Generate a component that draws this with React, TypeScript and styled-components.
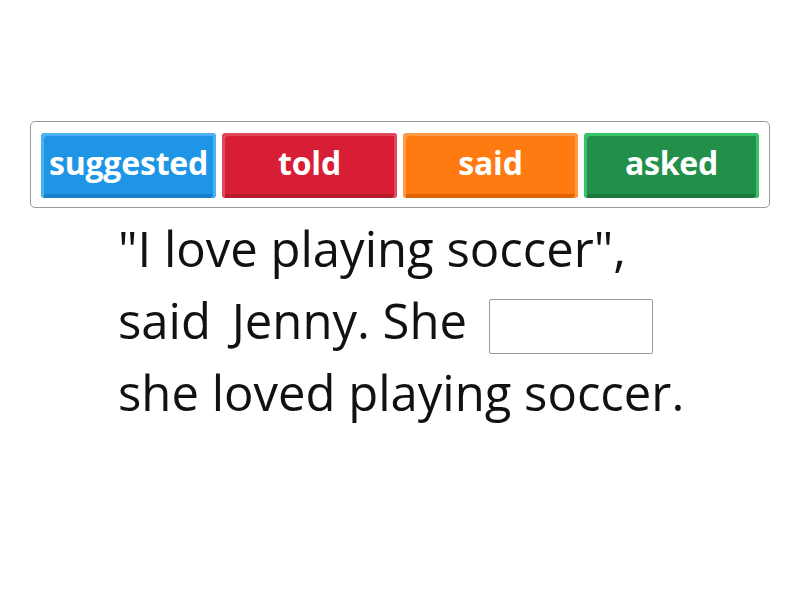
import React from "react";
import styled, { createGlobalStyle } from "styled-components";

const Global = createGlobalStyle`
  html, body { margin: 0; padding: 0; background: #ffffff; }
  body { width: 800px; height: 600px; overflow: hidden; font-family: "Open Sans", "Liberation Sans", sans-serif; }
`;

const Page = styled.div`
  width: 800px;
  height: 600px;
  display: flex;
  flex-direction: column;
  align-items: center;
  padding-top: 121px;
  box-sizing: border-box;
`;

const Tray = styled.div`
  width: 740px;
  box-sizing: border-box;
  border: 1px solid #9a9a9a;
  border-radius: 5px;
  padding: 11px 10px 9px 10px;
  display: flex;
  gap: 6px;
`;

type Tone = { base: string; rim: string; dark: string };

const tones: Record<string, Tone> = {
  blue: { base: "#1e95e5", rim: "#4cb0f1", dark: "#1780c9" },
  red: { base: "#d81e35", rim: "#e3495c", dark: "#b8192c" },
  orange: { base: "#ff7a10", rim: "#ff9a46", dark: "#e06502" },
  green: { base: "#22904a", rim: "#35c468", dark: "#1b763c" },
};

const Word = styled.div<{ $tone: Tone }>`
  flex: 0 0 175px;
  height: 65px;
  box-sizing: border-box;
  border-radius: 4px;
  background: ${(p) => p.$tone.base};
  box-shadow: inset 3px 3px 0 ${(p) => p.$tone.rim}, inset -3px 0 0 ${(p) => p.$tone.rim},
    inset 0 -4px 0 ${(p) => p.$tone.dark};
  display: flex;
  align-items: center;
  justify-content: center;
  padding-bottom: 6px;
  color: #ffffff;
  font-family: "Open Sans", "Liberation Sans", sans-serif;
  font-weight: 700;
  font-size: 32px;
  letter-spacing: -0.2px;
`;

const Sentence = styled.div`
  width: 600px;
  margin-left: 118px;
  align-self: flex-start;
  margin-top: 4px;
  font-family: "Open Sans", "Liberation Sans", sans-serif;
  font-size: 49px;
  line-height: 72px;
  color: #111111;
`;

const Spacer = styled.span`
  display: inline-block;
  width: 8px;
`;

const Blank = styled.span`
  display: inline-block;
  width: 164px;
  height: 55px;
  box-sizing: border-box;
  border: 1px solid #9a9a9a;
  border-radius: 2px;
  vertical-align: middle;
  margin-left: 22px;
  margin-top: 2px;
`;

export default function App() {
  const words: [string, Tone][] = [
    ["suggested", tones.blue],
    ["told", tones.red],
    ["said", tones.orange],
    ["asked", tones.green],
  ];
  return (
    <>
      <Global />
      <Page>
        <Tray>
          {words.map(([w, t]) => (
            <Word key={w} $tone={t}>
              {w}
            </Word>
          ))}
        </Tray>
        <Sentence>
          {'"I love playing soccer", said'}
          <Spacer /> {"Jenny. She"}
          <Blank /> {"she loved playing soccer."}
        </Sentence>
      </Page>
    </>
  );
}
